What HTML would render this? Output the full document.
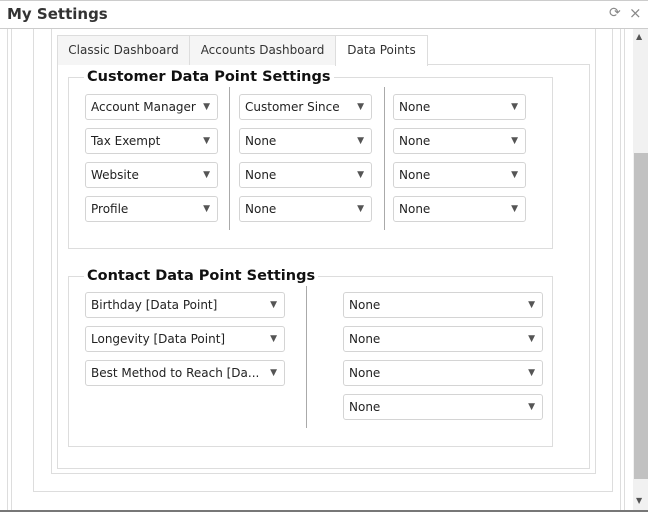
<!DOCTYPE html>
<html><head><style>
*{box-sizing:border-box;margin:0;padding:0}
body{width:648px;height:512px;background:#fff;position:relative;overflow:hidden;font-family:"DejaVu Sans","Liberation Sans",sans-serif;color:#333}
.a{position:absolute}
.vl{position:absolute;width:1px;background:#ddd}
.hl{position:absolute;height:1px;background:#ddd}
.box{position:absolute;border:1px solid #ddd}
.sel{position:absolute;height:26px;border:1px solid #d4d4d4;border-radius:3px;background:#fff;font-size:12px;line-height:24px;padding-left:5px;color:#222;white-space:nowrap;overflow:hidden}
.sel:after{content:"▼";position:absolute;right:7px;top:0;font-size:9px;color:#555}
.leg{position:absolute;background:#fff;font-weight:bold;font-size:14.5px;padding:0 3px;color:#111;line-height:18px}
.tab{position:absolute;top:35px;height:30px;border:1px solid #ddd;border-bottom:none;background:#f5f5f5;font-size:12px;line-height:28px;text-align:center;color:#333}
</style></head><body>
<div class="hl" style="top:0;left:0;width:648px;background:#ccc"></div>
<div class="a" style="left:7px;top:5px;font-weight:bold;font-size:15px;color:#333">My Settings</div>
<div class="a" style="left:609px;top:5px;font-size:14px;color:#888">⟳</div>
<div class="a" style="left:629px;top:4px;font-size:15px;color:#888">×</div>
<div class="hl" style="top:28px;left:0;width:648px;background:#ccc"></div>
<div class="vl" style="left:7px;top:29px;height:482px"></div>
<div class="vl" style="left:11px;top:29px;height:482px"></div>
<div class="vl" style="left:620px;top:29px;height:482px"></div>
<div class="vl" style="left:624px;top:29px;height:482px"></div>
<div class="box" style="left:33px;top:29px;width:580px;height:463px;border-top:none"></div>
<div class="box" style="left:51px;top:29px;width:545px;height:445px;border-top:none"></div>
<div class="box" style="left:57px;top:64px;width:533px;height:405px"></div>
<div class="tab" style="left:57px;width:133px">Classic Dashboard</div>
<div class="tab" style="left:189px;width:147px">Accounts Dashboard</div>
<div class="tab" style="left:335px;width:93px;background:#fff;height:31px">Data Points</div>
<div class="a" style="left:633px;top:29px;width:15px;height:482px;background:#f1f1f1"></div>
<div class="a" style="left:634px;top:153px;width:14px;height:326px;background:#c1c1c1"></div>
<div class="a" style="left:636px;top:32px;font-size:8px;color:#555">▲</div>
<div class="a" style="left:636px;top:496px;font-size:8px;color:#555">▼</div>
<div class="hl" style="top:510px;left:0;width:648px;height:2px;background:#777"></div>

<div class="box" style="left:68px;top:77px;width:485px;height:172px"></div>
<div class="leg" style="left:84px;top:68px">Customer Data Point Settings</div>
<div class="vl" style="left:229px;top:87px;height:143px;background:#aaa"></div>
<div class="vl" style="left:384px;top:87px;height:143px;background:#aaa"></div>
<div class="sel" style="left:85px;top:94px;width:133px">Account Manager</div>
<div class="sel" style="left:85px;top:128px;width:133px">Tax Exempt</div>
<div class="sel" style="left:85px;top:162px;width:133px">Website</div>
<div class="sel" style="left:85px;top:196px;width:133px">Profile</div>
<div class="sel" style="left:239px;top:94px;width:133px">Customer Since</div>
<div class="sel" style="left:239px;top:128px;width:133px">None</div>
<div class="sel" style="left:239px;top:162px;width:133px">None</div>
<div class="sel" style="left:239px;top:196px;width:133px">None</div>
<div class="sel" style="left:393px;top:94px;width:133px">None</div>
<div class="sel" style="left:393px;top:128px;width:133px">None</div>
<div class="sel" style="left:393px;top:162px;width:133px">None</div>
<div class="sel" style="left:393px;top:196px;width:133px">None</div>

<div class="box" style="left:68px;top:276px;width:485px;height:171px"></div>
<div class="leg" style="left:84px;top:267px">Contact Data Point Settings</div>
<div class="vl" style="left:306px;top:286px;height:142px;background:#aaa"></div>
<div class="sel" style="left:85px;top:292px;width:200px">Birthday [Data Point]</div>
<div class="sel" style="left:85px;top:326px;width:200px">Longevity [Data Point]</div>
<div class="sel" style="left:85px;top:360px;width:200px">Best Method to Reach [Da...</div>
<div class="sel" style="left:343px;top:292px;width:200px">None</div>
<div class="sel" style="left:343px;top:326px;width:200px">None</div>
<div class="sel" style="left:343px;top:360px;width:200px">None</div>
<div class="sel" style="left:343px;top:394px;width:200px">None</div>
</body></html>
